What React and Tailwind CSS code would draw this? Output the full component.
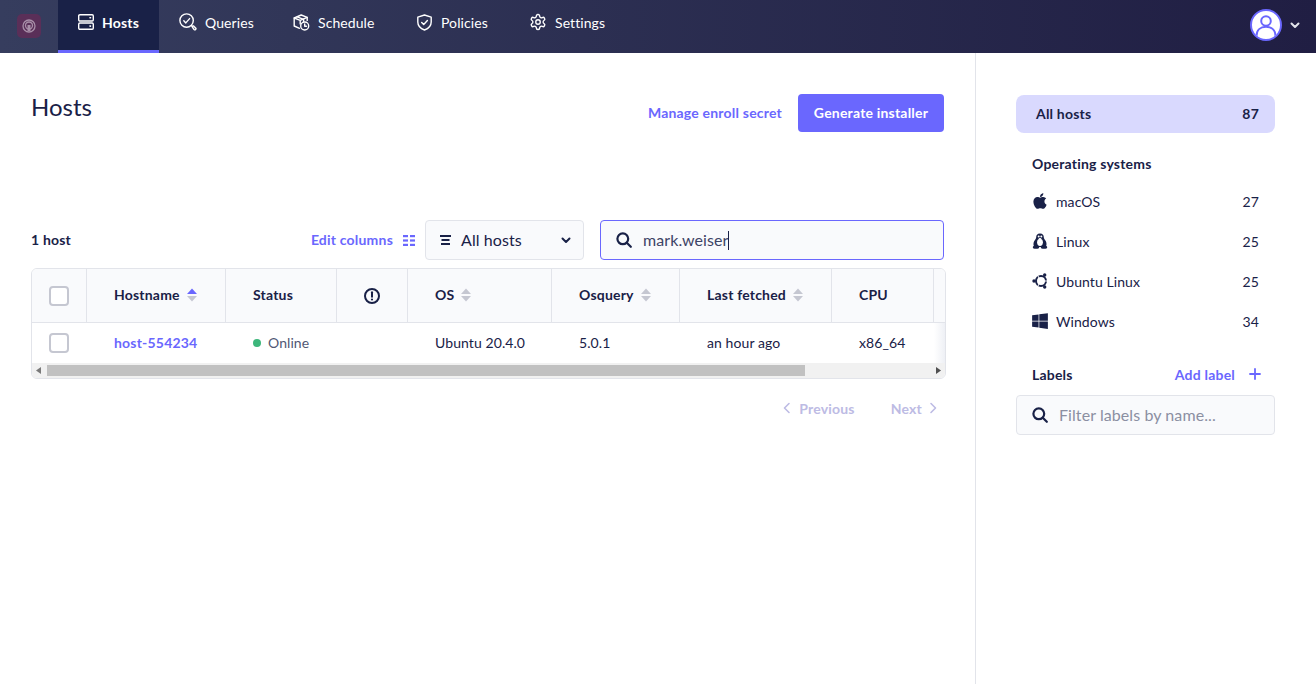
import React from "react";
import { FaApple, FaWindows } from "react-icons/fa";

const S = { fill: "none", stroke: "currentColor", strokeWidth: 1.4, strokeLinecap: "round", strokeLinejoin: "round" };

function HostsIcon() {
  return (
    <svg width="16" height="16" viewBox="0 0 16 16" {...S} className="shrink-0">
      <rect x="0.7" y="0.7" width="14.6" height="6.3" rx="1.2" />
      <rect x="0.7" y="9" width="14.6" height="6.3" rx="1.2" />
      <path d="M12 3.8h.5M12 12.1h.5" strokeWidth="1.6" />
    </svg>
  );
}
function QueriesIcon() {
  return (
    <svg width="18" height="18" viewBox="0 0 18 18" {...S} className="shrink-0">
      <circle cx="7.6" cy="7.6" r="6.7" />
      <path d="M4.8 7.8l2 2.1 3.8-4.3" />
      <path d="M12.4 12.4l1 1" />
      <path d="M13.2 13.8a1 1 0 0 1 1.4-.8l2 2a1 1 0 0 1-1.5 1.5z" />
    </svg>
  );
}
function ScheduleIcon() {
  return (
    <svg width="17" height="17" viewBox="0 0 17 17" {...S} className="shrink-0">
      <path d="M6.5 14.3L1.2 12V4l7-3 6 2.4v3" />
      <path d="M1.2 4l6 2.4 7-3M7.2 6.4V10" />
      <path d="M4.2 2.8l6.4 2.6v2" />
      <circle cx="11.7" cy="12" r="4" />
      <path d="M11.7 10v2.2h1.8" />
    </svg>
  );
}
function PoliciesIcon() {
  return (
    <svg width="17" height="17" viewBox="0 0 17 17" {...S} className="shrink-0">
      <path d="M8.5 1L15.2 3.2V8c0 3.8-2.8 6.6-6.7 8C4.6 14.600 1.800 11.800 1.800 8V3.200z" />
      <path d="M5.700 8.500l2 2 3.700-4" />
    </svg>
  );
}
function SettingsIcon() {
  return (
    <svg width="18" height="18" viewBox="0 0 24 24" fill="none" stroke="currentColor" strokeWidth="1.8" strokeLinecap="round" strokeLinejoin="round" className="shrink-0">
      <path d="M12.22 2h-.44a2 2 0 0 0-2 2v.18a2 2 0 0 1-1 1.73l-.43.25a2 2 0 0 1-2 0l-.15-.08a2 2 0 0 0-2.73.73l-.22.38a2 2 0 0 0 .73 2.73l.15.1a2 2 0 0 1 1 1.72v.51a2 2 0 0 1-1 1.74l-.15.09a2 2 0 0 0-.73 2.73l.22.38a2 2 0 0 0 2.73.73l.15-.08a2 2 0 0 1 2 0l.43.25a2 2 0 0 1 1 1.73V20a2 2 0 0 0 2 2h.44a2 2 0 0 0 2-2v-.18a2 2 0 0 1 1-1.73l.43-.25a2 2 0 0 1 2 0l.15.08a2 2 0 0 0 2.73-.73l.22-.39a2 2 0 0 0-.73-2.73l-.15-.08a2 2 0 0 1-1-1.74v-.5a2 2 0 0 1 1-1.74l.15-.09a2 2 0 0 0 .73-2.73l-.22-.38a2 2 0 0 0-2.73-.73l-.15.08a2 2 0 0 1-2 0l-.43-.25a2 2 0 0 1-1-1.73V4a2 2 0 0 0-2-2z" />
      <circle cx="12" cy="12" r="3" />
    </svg>
  );
}
function SearchIcon() {
  return (
    <svg width="16" height="16" viewBox="0 0 16 16" fill="none" stroke="#192147" strokeWidth="2.2" strokeLinecap="round" className="shrink-0">
      <circle cx="6.800" cy="6.800" r="5.400" />
      <path d="M11 11l3.800 3.800" />
    </svg>
  );
}
function PenguinIcon() {
  return (
    <svg width="16" height="16" viewBox="0 0 16 16" className="shrink-0">
      <path d="M8 .4C5.200.4 4.200 2.200 4.200 4.200c0 1.200-.7 2-1.400 3C1.800 8.600 1.200 10.400 1.600 12.400L3 14h10l1.400-1.600c.4-2-.2-3.800-1.200-5.200-.7-1-1.400-1.800-1.400-3C11.800 2.200 10.800.4 8 .4z" fill="#192147" />
      <ellipse cx="8" cy="9.300" rx="2.900" ry="3.600" fill="#fff" />
      <circle cx="6.700" cy="3.400" r="1" fill="#fff" />
      <circle cx="9.300" cy="3.400" r="1" fill="#fff" />
      <path d="M6.400 5h3.200L8 6.500z" fill="#fff" />
      <ellipse cx="4" cy="14.200" rx="3.200" ry="1.600" fill="#192147" />
      <ellipse cx="12" cy="14.200" rx="3.200" ry="1.600" fill="#192147" />
    </svg>
  );
}
function UbuntuIcon() {
  return (
    <svg width="16" height="16" viewBox="0 0 16 16" className="shrink-0">
      <circle cx="9" cy="8" r="5" fill="none" stroke="#192147" strokeWidth="2" />
      <path d="M5 1.100L7 5M5 14.900L7 11M15.500 8H11.500" stroke="#fff" strokeWidth="1" />
      <circle cx="2" cy="8" r="1.700" fill="#192147" />
      <circle cx="12.700" cy="2" r="1.700" fill="#192147" />
      <circle cx="12.700" cy="14" r="1.700" fill="#192147" />
    </svg>
  );
}
function Sort({ active }) {
  return (
    <svg width="10" height="14" viewBox="0 0 10 14" className="shrink-0">
      <path d="M5 0.500L10 6H0z" fill={active ? "#6a67fe" : "#c5c7d1"} />
      <path d="M5 13.500L0 8h10z" fill="#c5c7d1" />
    </svg>
  );
}
function Chevron({ cls, w = 10, sw = 2 }) {
  return (
    <svg width={w} height="7" viewBox="0 0 10 7" fill="none" stroke="currentColor" strokeWidth={sw} strokeLinecap="round" strokeLinejoin="round" className={cls}>
      <path d="M1.500 1.500L5 5l3.500-3.500" />
    </svg>
  );
}
function Checkbox() {
  return <div className="w-5 h-5 rounded-[4px] border-2 border-[#c5c7d1] bg-white" />;
}

const nav = [
  ["Hosts", HostsIcon, "w-[101px]", true],
  ["Queries", QueriesIcon, "w-[114px]"],
  ["Schedule", ScheduleIcon, "w-[123px]"],
  ["Policies", PoliciesIcon, "w-[113px]"],
  ["Settings", SettingsIcon, "w-[120px]"],
];

const columns = [
  ["", "w-[55px]"],
  ["Hostname", "w-[139px]"],
  ["Status", "w-[111px]"],
  ["", "w-[71px]"],
  ["OS", "w-[144px]"],
  ["Osquery", "w-[128px]"],
  ["Last fetched", "w-[152px]"],
  ["CPU", "w-[102px]"],
];

const osRows = [
  ["macOS", 27, () => <FaApple size={18} />],
  ["Linux", 25, PenguinIcon],
  ["Ubuntu Linux", 25, UbuntuIcon],
  ["Windows", 34, () => <FaWindows size={18} />],
];

const B = "font-bold tracking-[0.2px]";

function HeaderCell({ label, w, i }) {
  return (
    <div className={`${w} shrink-0 h-full flex items-center border-r border-[#e2e4ea] ${i === 0 ? "pl-[17px]" : i === 3 ? "justify-center" : "pl-[27px] pb-[2px]"}`}>
      {i === 0 && <Checkbox />}
      {i === 3 && (
        <svg width="16" height="16" viewBox="0 0 16 16" fill="none" className="shrink-0">
          <circle cx="8" cy="8" r="7" stroke="#192147" strokeWidth="2" />
          <path d="M8 4.200v4.600" stroke="#192147" strokeWidth="2" strokeLinecap="round" />
          <circle cx="8" cy="11.500" r="1.100" fill="#192147" />
        </svg>
      )}
      {label && <span className={B}>{label}</span>}
      {label && label !== "Status" && label !== "CPU" && (
        <span className="ml-[7px]"><Sort active={label === "Hostname"} /></span>
      )}
    </div>
  );
}

export default function App() {
  return (
    <div className="w-[1316px] h-[696px] bg-white text-[#192147] text-[14px] tracking-[0.08px] [font-family:Lato,'Open_Sans',sans-serif] overflow-hidden">
      <nav className="h-[53px] flex bg-gradient-to-r from-[#363d5e] to-[#201e43] text-white">
        <div className="w-[58px] flex items-center pl-[17px] pb-px">
          <div className="w-6 h-6 rounded-[5px] bg-[#5a2f58] flex items-center justify-center">
            <svg width="14" height="14" viewBox="0 0 14 14" fill="none" stroke="#a88fa8" strokeWidth="1.300">
              <circle cx="7" cy="7" r="6" />
              <circle cx="7" cy="6.500" r="3.500" />
              <rect x="5.500" y="6" width="3" height="6" fill="#a88fa8" stroke="none" />
            </svg>
          </div>
        </div>
        {nav.map(([label, Icon, w, active]) => (
          <div key={label} className={`${w} h-full shrink-0 flex items-center gap-2 pl-5 ${active ? `bg-[#192147] border-b-[3px] border-[#6a67fe] pb-[6px] ${B}` : "pb-[9px]"}`}>
            <Icon />
            <span>{label}</span>
          </div>
        ))}
        <div className="ml-auto flex items-center pr-[16px] pb-[3px] gap-[8px]">
          <div className="w-8 h-8 rounded-full bg-white border-2 border-[#6a67fe] overflow-hidden flex items-center justify-center">
            <svg width="28" height="28" viewBox="0 0 28 28" fill="none">
              <circle cx="14" cy="10" r="4.800" stroke="#6a67fe" strokeWidth="2" />
              <path d="M4.500 25c0-6 4-9.200 9.500-9.200s9.500 3.200 9.500 9.200" stroke="#6a67fe" strokeWidth="2" />
            </svg>
          </div>
          <Chevron cls="text-[#e2e4ea]" />
        </div>
      </nav>

      <div className="flex h-[631px]">
        <main className="w-[976px] shrink-0 border-r border-[#e2e4ea] pl-[31px] pr-[31px] pt-[41px]">
          <div className="h-[38px] flex items-start justify-between">
            <h1 className="text-[24px] leading-[25px] font-normal tracking-normal">Hosts</h1>
            <div className="flex items-center gap-4 h-full">
              <span className={`${B} text-[#6a67fe] pb-px`}>Manage enroll secret</span>
              <button className={`h-[38px] w-[146px] rounded-[4px] bg-[#6a67fe] text-white pb-px ${B}`}>Generate installer</button>
            </div>
          </div>

          <div className="mt-[88px] h-10 flex items-center w-[913px]">
            <span className={`${B} pb-px`}>1 host</span>
            <div className={`ml-auto flex items-center gap-[10px] text-[#6a67fe] ${B}`}>
              <span className="pb-px">Edit columns</span>
              <svg width="12" height="11" viewBox="0 0 12 11" fill="#6a67fe">
                <rect x="0" y="0" width="5" height="2.200" />
                <rect x="7" y="0" width="5" height="2.200" />
                <rect x="0" y="4.400" width="5" height="2.200" />
                <rect x="7" y="4.400" width="5" height="2.200" />
                <rect x="0" y="8.800" width="5" height="2.200" />
                <rect x="7" y="8.800" width="5" height="2.200" />
              </svg>
            </div>
            <div className="ml-[10px] w-[159px] h-10 rounded-[4px] border border-[#e2e4ea] bg-[#f9fafc] flex items-center pl-[14px] pr-[12px]">
              <svg width="11" height="10" viewBox="0 0 11 10" fill="#192147" className="shrink-0">
                <rect x="0" y="0" width="11" height="2" />
                <rect x="1.500" y="4" width="8" height="2" />
                <rect x="1" y="8" width="9" height="2" />
              </svg>
              <span className="ml-[10px] text-[16px]">All hosts</span>
              <Chevron cls="ml-auto text-[#192147]" />
            </div>
            <div className="ml-4 w-[344px] h-10 rounded-[4px] border border-[#6a67fe] bg-[#f9fafc] flex items-center pl-[15px]">
              <SearchIcon />
              <span className="ml-[11px] text-[16px] text-[#3d4466] pb-px">mark.weiser</span>
              <span className="w-px h-[19px] bg-[#192147]" />
            </div>
          </div>

          <div className="mt-2 w-[915px] rounded-[6px] border border-[#e2e4ea] overflow-hidden">
            <div className="h-[54px] flex bg-[#f9fafc] border-b border-[#e2e4ea]">
              {columns.map(([label, w], i) => (
                <HeaderCell key={i} label={label} w={w} i={i} />
              ))}
            </div>
            <div className="h-10 flex items-center">
              <div className="w-[55px] shrink-0 pl-[17px]"><Checkbox /></div>
              <div className={`w-[139px] shrink-0 pl-[27px] pb-[2px] text-[#6a67fe] ${B}`}>host-554234</div>
              <div className="w-[111px] shrink-0 pl-[27px] pb-[2px] flex items-center gap-[7px] text-[#515774]">
                <span className="w-2 h-2 rounded-full bg-[#3db67b] mt-[1px]" />
                Online
              </div>
              <div className="w-[71px] shrink-0" />
              <div className="w-[144px] shrink-0 pl-[27px] pb-[2px]">Ubuntu 20.4.0</div>
              <div className="w-[128px] shrink-0 pl-[27px] pb-[2px]">5.0.1</div>
              <div className="w-[152px] shrink-0 pl-[27px] pb-[2px]">an hour ago</div>
              <div className="w-[102px] shrink-0 pl-[27px] pb-[2px]">x86_64</div>
              <div className="ml-auto w-[11px] h-full bg-gradient-to-r from-transparent to-[#eef0f5]" />
            </div>
            <div className="h-[15px] bg-[#f1f1f1] flex items-center pl-[4px] pr-[4px]">
              <svg width="5" height="7" viewBox="0 0 5 7" fill="#7a7a7a" className="shrink-0"><path d="M5 0v7L0 3.500z" /></svg>
              <div className="ml-[6px] w-[758px] h-[11px] bg-[#c1c1c1]" />
              <svg width="5" height="7" viewBox="0 0 5 7" fill="#505050" className="ml-auto shrink-0"><path d="M0 0v7l5-3.500z" /></svg>
            </div>
          </div>

          <div className={`mt-[19px] w-[913px] flex justify-end items-center text-[#bdbbe4] h-5 ${B}`}>
            <svg width="8" height="12" viewBox="0 0 8 12" fill="none" stroke="currentColor" strokeWidth="1.600" strokeLinecap="round" strokeLinejoin="round"><path d="M6 1.500L1.500 6 6 10.500" /></svg>
            <span className="ml-[8px]">Previous</span>
            <span className="ml-[36px]">Next</span>
            <svg width="8" height="12" viewBox="0 0 8 12" fill="none" stroke="currentColor" strokeWidth="1.600" strokeLinecap="round" strokeLinejoin="round" className="ml-[7px] mr-[7px]"><path d="M2 1.500L6.500 6 2 10.500" /></svg>
          </div>
        </main>

        <aside className="w-[340px] pl-10 pr-[41px] pt-[42px]">
          <div className={`h-[38px] rounded-[8px] bg-[#d9d9fe] flex items-center justify-between pl-5 pr-4 pb-px ${B}`}>
            <span>All hosts</span>
            <span>87</span>
          </div>
          <div className={`mt-[21px] pl-4 leading-5 ${B}`}>Operating systems</div>
          <div className="mt-[7px]">
            {osRows.map(([name, n, Icon]) => (
              <div key={name} className="h-10 flex items-center pl-4 pr-4">
                <span className="w-4 flex justify-center"><Icon /></span>
                <span className="ml-2">{name}</span>
                <span className="ml-auto">{n}</span>
              </div>
            ))}
          </div>
          <div className="mt-[23px] h-5 flex items-center pl-4 pr-[14px]">
            <span className={B}>Labels</span>
            <span className={`ml-auto text-[#6a67fe] ${B}`}>Add label</span>
            <svg width="12" height="12" viewBox="0 0 12 12" stroke="#6a67fe" strokeWidth="1.800" strokeLinecap="round" className="ml-[14px]"><path d="M6 1v10M1 6h10" /></svg>
          </div>
          <div className="mt-[11px] h-10 rounded-[4px] border border-[#e2e4ea] bg-[#f9fafc] flex items-center pl-[15px]">
            <SearchIcon />
            <span className="ml-[11px] text-[16px] text-[#8b8fa2]">Filter labels by name...</span>
          </div>
        </aside>
      </div>
    </div>
  );
}
